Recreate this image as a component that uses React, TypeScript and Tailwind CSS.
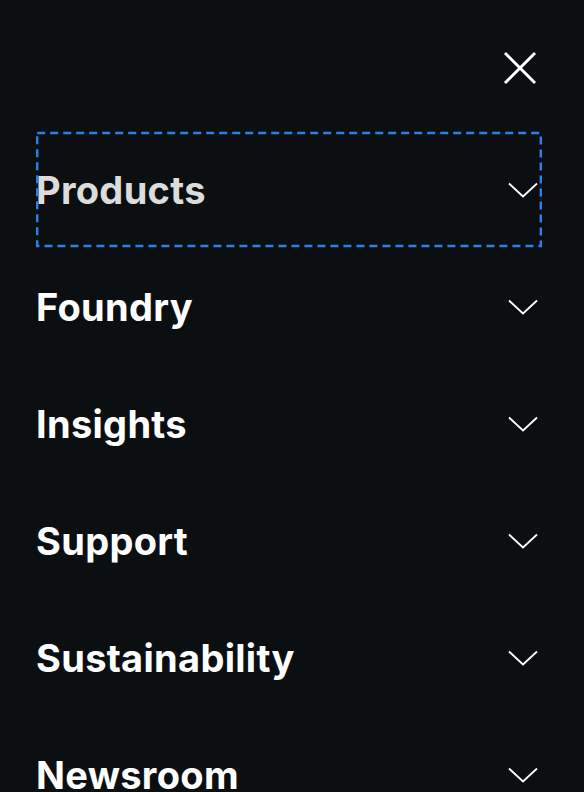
const items = ["Products", "Foundry", "Insights", "Support", "Sustainability", "Newsroom"];

function Chevron() {
  return (
    <svg width="30" height="16" viewBox="0 0 30 16" fill="none" className="shrink-0">
      <path d="M1 1.5 L15 14.5 L29 1.5" stroke="white" strokeWidth="1.8" />
    </svg>
  );
}

// dashed focus ring drawn over the first row
function FocusRing() {
  return (
    <svg className="pointer-events-none absolute inset-0" width="506" height="117" viewBox="0 0 506 117" fill="none">
      <rect x="1.2" y="2" width="503.6" height="113" stroke="#2a80e4" strokeWidth="2.4" strokeDasharray="8 5" />
    </svg>
  );
}

export default function App() {
  return (
    <div className="min-h-screen w-full bg-[#0c0f11] overflow-hidden" style={{ fontFamily: "Inter, 'Noto Sans', sans-serif" }}>
      <div className="flex justify-end pt-[50px] pr-[46px]">
        <button className="p-0 text-white">
          <svg width="36" height="36" viewBox="0 0 36 36" fill="none">
            <path d="M3 3 L33 33 M33 3 L3 33" stroke="white" strokeWidth="3" />
          </svg>
        </button>
      </div>

      <nav className="mt-[45px] pl-9 pr-[42px]">
        {items.map((label, i) => (
          <button
            key={label}
            className={`relative flex w-full h-[117px] items-center justify-between pr-1 ${
              i === 0 ? "text-[#dcdcdc]" : "text-white"
            }`}
          >
            {i === 0 && <FocusRing />}
            <span className="text-[38px] font-bold tracking-[0.3px] leading-none">{label}</span>
            <Chevron />
          </button>
        ))}
      </nav>
    </div>
  );
}
